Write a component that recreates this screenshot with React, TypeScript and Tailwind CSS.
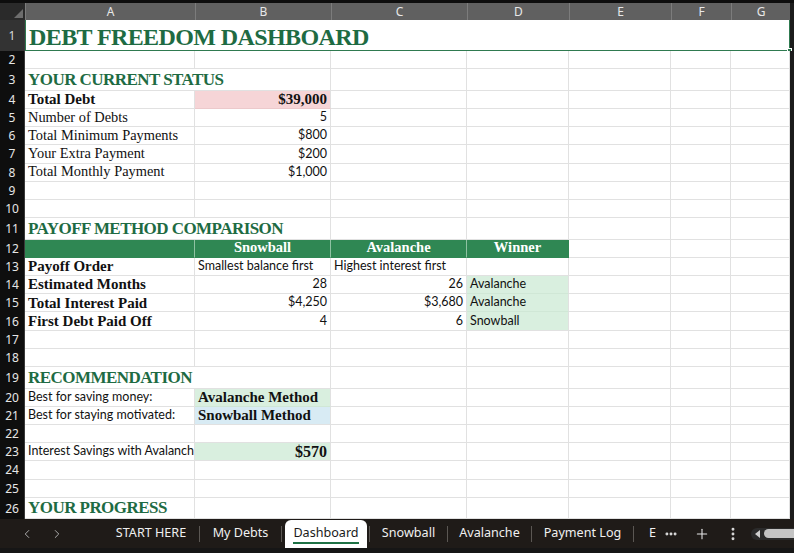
import { ChevronLeft, ChevronRight, Plus, EllipsisVertical, Ellipsis } from "lucide-react";

type Cell = { t?: string; s?: number; k?: string; b?: string };
type Row = { n: number; h: string; c: Cell[]; sel?: boolean };

const cols = "grid grid-cols-[25px_170px_136px_136px_102px_102px_60px_59px_4px]";

const SERIF = "font-['Liberation_Serif',serif] text-[14.4px] text-[#111]";
const SB = "font-['Liberation_Serif',serif] font-bold text-[15px] text-[#111]";
const SANS = "font-['Lato',sans-serif] text-[12.5px] text-[#111]";
const HEAD = "font-['Liberation_Serif',serif] font-bold text-[17px] tracking-[-0.55px] text-[#1e6b43]";
const R = "justify-end";
const GREENHEAD = "bg-[#2f8753] justify-center font-['Liberation_Serif',serif] font-bold text-[14.5px] text-white";
const GREENB = "border-r-[#8fc2a2] border-b-[#2f8753]";
const MINT = "bg-[#d9efdf]";
const MINTB = "border-r-[#e1e1e1] border-b-[#d0e7d6]";

const N = "h-[18.2px]";
const H = "h-[21.6px]";

const rows: Row[] = [
  {
    n: 1,
    h: "h-[31px]",
    sel: true,
    c: [{ t: "DEBT FREEDOM DASHBOARD", s: 7, k: "font-['Liberation_Serif',serif] font-bold text-[24px] tracking-[-0.6px] text-[#1e6b43] pl-[4px] pt-[3px]" }],
  },
  { n: 2, h: N, c: [] },
  { n: 3, h: H, c: [{ t: "YOUR CURRENT STATUS", s: 2, k: HEAD }] },
  { n: 4, h: N, c: [{ t: "Total Debt", k: SB }, { t: "$39,000", k: `${SB} ${R} bg-[#f6d5d7]`, b: "border-r-[#e1e1e1] border-b-[#ecc9cb]" }] },
  { n: 5, h: N, c: [{ t: "Number of Debts", k: SERIF }, { t: "5", k: `${SANS} ${R}` }] },
  { n: 6, h: N, c: [{ t: "Total Minimum Payments", k: SERIF }, { t: "$800", k: `${SANS} ${R}` }] },
  { n: 7, h: N, c: [{ t: "Your Extra Payment", k: SERIF }, { t: "$200", k: `${SANS} ${R}` }] },
  { n: 8, h: N, c: [{ t: "Total Monthly Payment", k: SERIF }, { t: "$1,000", k: `${SANS} ${R}` }] },
  { n: 9, h: N, c: [] },
  { n: 10, h: N, c: [] },
  { n: 11, h: H, c: [{ t: "PAYOFF METHOD COMPARISON", s: 2, k: HEAD }] },
  {
    n: 12,
    h: N,
    c: [
      { t: "", k: GREENHEAD, b: GREENB },
      { t: "Snowball", k: GREENHEAD, b: GREENB },
      { t: "Avalanche", k: GREENHEAD, b: GREENB },
      { t: "Winner", k: GREENHEAD, b: "border-r-[#2f8753] border-b-[#2f8753]" },
    ],
  },
  { n: 13, h: N, c: [{ t: "Payoff Order", k: SB }, { t: "Smallest balance first", k: SANS }, { t: "Highest interest first", k: SANS }] },
  { n: 14, h: N, c: [{ t: "Estimated Months", k: SB }, { t: "28", k: `${SANS} ${R}` }, { t: "26", k: `${SANS} ${R}` }, { t: "Avalanche", k: `${SANS} ${MINT}`, b: MINTB }] },
  { n: 15, h: N, c: [{ t: "Total Interest Paid", k: SB }, { t: "$4,250", k: `${SANS} ${R}` }, { t: "$3,680", k: `${SANS} ${R}` }, { t: "Avalanche", k: `${SANS} ${MINT}`, b: MINTB }] },
  { n: 16, h: N, c: [{ t: "First Debt Paid Off", k: SB }, { t: "4", k: `${SANS} ${R}` }, { t: "6", k: `${SANS} ${R}` }, { t: "Snowball", k: `${SANS} ${MINT}`, b: "border-r-[#e1e1e1] border-b-[#e1e1e1]" }] },
  { n: 17, h: N, c: [] },
  { n: 18, h: N, c: [] },
  { n: 19, h: H, c: [{ t: "RECOMMENDATION", s: 2, k: HEAD }] },
  { n: 20, h: N, c: [{ t: "Best for saving money:", k: SANS }, { t: "Avalanche Method", k: `${SB} ${MINT}`, b: MINTB }] },
  { n: 21, h: N, c: [{ t: "Best for staying motivated:", k: SANS }, { t: "Snowball Method", k: `${SB} bg-[#d8ebf4]` }] },
  { n: 22, h: N, c: [] },
  { n: 23, h: N, c: [{ t: "Interest Savings with Avalanche", k: SANS }, { t: "$570", k: `${SB} text-[16px] ${R} ${MINT}` }] },
  { n: 24, h: N, c: [] },
  { n: 25, h: N, c: [] },
  { n: 26, h: H, c: [{ t: "YOUR PROGRESS", k: HEAD }] },
];

function SheetRow({ row }: { row: Row }) {
  const cells = [...row.c];
  let used = cells.reduce((a, c) => a + (c.s ?? 1), 0);
  while (used < 7) {
    cells.push({});
    used++;
  }
  return (
    <div className={`${cols} ${row.h} relative bg-white`}>
      <div
        className={`flex items-center justify-center font-['Noto_Sans',sans-serif] text-[12px] border-r border-[#3a3a3a] ${
          row.sel ? "bg-[#333333] text-[#d8d8d8]" : "bg-[#0e0e0e] text-[#e6e6e6]"
        }`}
      >
        {row.n}
      </div>
      {cells.map((c, i) => (
        <div
          key={i}
          className={`flex items-center whitespace-nowrap overflow-hidden px-[3px] border-r border-b ${c.b ?? "border-[#e1e1e1]"} ${
            c.s === 7 ? "col-span-7" : c.s === 2 ? "col-span-2" : ""
          } ${c.k ?? ""}`}
        >
          {c.t}
        </div>
      ))}
      <div className="bg-[#1c1c1c]" />
      {row.sel && (
        <div className="absolute left-[25px] right-[4px] top-[-1px] bottom-0 border-[1.5px] border-[#2f7a50] pointer-events-none">
          <div className="absolute right-[-3px] bottom-[-3px] w-[5px] h-[5px] bg-[#2f7a50] border border-white" />
        </div>
      )}
    </div>
  );
}

const letters = [
  ["A", "w-[170px]"],
  ["B", "w-[136px]"],
  ["C", "w-[136px]"],
  ["D", "w-[102px]"],
  ["E", "w-[102px]"],
  ["F", "w-[60px]"],
  ["G", "w-[59px]"],
];

function Sep() {
  return <div className="w-px h-[16px] bg-[#5b5753] shrink-0" />;
}

function Tab({ label, w }: { label: string; w: string }) {
  return <div className={`${w} shrink-0 flex items-center justify-center text-[#f0f0f0]`}>{label}</div>;
}

export default function App() {
  return (
    <div className="w-[794px] h-[553px] overflow-hidden flex flex-col bg-[#141414] select-none">
      <div className="h-[3px] bg-[#0d0d0d]" />
      {/* column headers */}
      <div className="h-[17px] flex font-['Noto_Sans',sans-serif] text-[12px] text-[#e8e8e8]">
        <div className="w-[25px] bg-[#2a2a2a] relative shrink-0">
          <div className="absolute right-[2px] bottom-[2px] w-0 h-0 border-l-[9px] border-l-transparent border-b-[9px] border-b-[#6d6d6d]" />
        </div>
        {letters.map(([l, w]) => (
          <div key={l} className={`${w} shrink-0 bg-[#606060] border-l border-[#7c7c7c] flex items-center justify-center`}>
            {l}
          </div>
        ))}
        <div className="flex-1 bg-[#1c1c1c]" />
      </div>
      {/* sheet body */}
      <div className="h-[499px] overflow-hidden bg-white">
        {rows.map((r) => (
          <SheetRow key={r.n} row={r} />
        ))}
      </div>
      {/* sheet tabs */}
      <div className="h-[29px] bg-[#1f1b18] flex items-center font-['Noto_Sans',sans-serif] text-[12.6px] shrink-0">
        <div className="w-[103px] shrink-0 flex items-center pl-[20px] text-[#b5b5b5]">
          <ChevronLeft size={14} strokeWidth={1.6} />
          <ChevronRight size={14} strokeWidth={1.6} className="ml-[16px]" />
        </div>
        <Tab label="START HERE" w="w-[96px]" />
        <Sep />
        <Tab label="My Debts" w="w-[81px]" />
        <Sep />
        <div className="w-[3px] shrink-0" />
        <div className="w-[82px] h-[28px] self-end shrink-0 bg-white rounded-t-[6px] flex items-center justify-center">
          <span className="text-[#1a1a1a] border-b-2 border-[#1e7145] leading-[18px]">Dashboard</span>
        </div>
        <div className="w-[2px] shrink-0" />
        <Sep />
        <Tab label="Snowball" w="w-[77px]" />
        <Sep />
        <Tab label="Avalanche" w="w-[83px]" />
        <Sep />
        <Tab label="Payment Log" w="w-[101px]" />
        <Sep />
        <div className="ml-[15px] text-[#f0f0f0]">E</div>
        <Ellipsis size={14} strokeWidth={3} className="ml-[8px] text-[#e0e0e0]" />
        <Plus size={16} strokeWidth={1.6} className="ml-[16px] text-[#e8e8e8]" />
        <EllipsisVertical size={16} strokeWidth={2.4} className="ml-[15px] text-[#d8d8d8]" />
        <div className="ml-[10px] flex-1 h-[12px] rounded-l-full bg-[#2b2b2b] flex items-center pl-[4px]">
          <div className="w-0 h-0 border-y-[4px] border-y-transparent border-r-[5px] border-r-[#cfcfcf]" />
          <div className="ml-[4px] flex-1 h-[9px] rounded-l-full bg-[#c4c4c4]" />
        </div>
      </div>
      <div className="flex-1 bg-[#161616]" />
    </div>
  );
}
